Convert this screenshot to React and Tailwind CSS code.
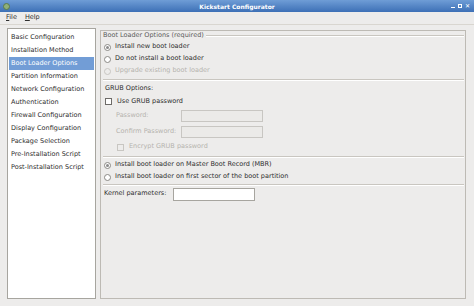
import React from "react";

const Radio = ({ checked, disabled }) => (
  <span
    className={`inline-flex items-center justify-center w-[7px] h-[7px] rounded-full border ${
      disabled ? "border-[#c8c6c2] bg-[#edeceb]" : "border-[#8a8884] bg-white"
    } mr-[4px] shrink-0`}
  >
    {checked && <span className="w-[3px] h-[3px] rounded-full bg-[#8a8a8a]" />}
  </span>
);

const Check = ({ disabled }) => (
  <span
    className={`inline-block w-[7px] h-[7px] border ${
      disabled ? "border-[#c8c6c2]" : "border-[#6d6b68] bg-white"
    } mr-[5px] shrink-0`}
  />
);

const Sep = ({ className = "" }) => (
  <div className={`h-[2px] border-t border-[#c9c6c0] border-b-white border-b ${className}`} />
);

export default function App() {
  const items = [
    "Basic Configuration",
    "Installation Method",
    "Boot Loader Options",
    "Partition Information",
    "Network Configuration",
    "Authentication",
    "Firewall Configuration",
    "Display Configuration",
    "Package Selection",
    "Pre-Installation Script",
    "Post-Installation Script",
  ];
  return (
    <div
      className="w-[474px] h-[306px] bg-[#edeceb] flex flex-col text-[6.5px] text-[#2e2e2e] overflow-hidden whitespace-nowrap"
      style={{ fontFamily: '"DejaVu Sans", sans-serif' }}
    >
      {/* title bar */}
      <div className="h-[12px] bg-gradient-to-b from-[#6f9dd6] to-[#3d70b6] flex items-center relative shrink-0">
        <span className="ml-[3px] w-[7px] h-[7px] rounded-full bg-[#8fb07a] border border-[#5b7a4a]" />
        <span className="absolute left-0 right-0 text-center text-white font-bold text-[6px]">
          Kickstart Configurator
        </span>
        <div className="ml-auto flex items-center gap-[3px] mr-[4px] text-white">
          <span className="w-[4px] h-[1px] bg-white mt-[3px]" />
          <span className="w-[4px] h-[4px] border border-white" />
          <span className="text-[6px] font-bold leading-none">✕</span>
        </div>
      </div>
      {/* menu */}
      <div className="h-[13px] flex items-center gap-[8px] pl-[6px] shrink-0 border-b border-[#d9d6d0] text-[6.5px]">
        <span><u>F</u>ile</span>
        <span><u>H</u>elp</span>
      </div>
      <div className="flex-1 flex pl-[7px] pr-[8px] pt-[3px] pb-[7px] gap-[4px]">
        {/* left list */}
        <div className="w-[89px] bg-white border border-[#a7a59f] flex flex-col pt-[2px] px-[1px]">
          {items.map((t) => (
            <div
              key={t}
              className={`h-[13px] flex items-center pl-[2px] ${
                t === "Boot Loader Options" ? "bg-[#729dd6] text-white" : ""
              }`}
            >
              {t}
            </div>
          ))}
        </div>
        {/* right panel */}
        <div className="flex-1 mt-[2px] border border-[#bdbab4] flex flex-col pl-[2px] pr-[1px]">
          <div className="flex items-center h-[10px]">
            <span className="text-[#5a5a5a]">Boot Loader Options (required)</span>
            <div className="flex-1 ml-[2px] h-[2px] border-t border-[#c9c6c0] border-b border-b-white" />
          </div>
          <div className="pl-[1px] flex flex-col">
            <div className="h-[12px] flex items-center"><Radio checked />Install new boot loader</div>
            <div className="h-[12px] flex items-center"><Radio />Do not install a boot loader</div>
            <div className="h-[12px] flex items-center text-[#b5b3ae]"><Radio disabled />Upgrade existing boot loader</div>
          </div>
          <Sep className="mt-[2px]" />
          <div className="pl-[2px] flex flex-col">
            <div className="h-[13px] flex items-center mt-[1px]">GRUB Options:</div>
            <div className="h-[13px] flex items-center"><Check />Use GRUB password</div>
            <div className="h-[16px] flex items-center text-[#b5b3ae]">
              <span className="w-[76px] pl-[11px]">Password:</span>
              <span className="w-[82px] h-[12px] border border-[#c8c6c2] bg-[#ebeae8]" />
            </div>
            <div className="h-[16px] flex items-center text-[#b5b3ae]">
              <span className="w-[76px] pl-[11px]">Confirm Password:</span>
              <span className="w-[82px] h-[12px] border border-[#c8c6c2] bg-[#ebeae8]" />
            </div>
            <div className="h-[14px] flex items-center text-[#b5b3ae] pl-[12px]"><Check disabled />Encrypt GRUB password</div>
          </div>
          <Sep className="mt-[2px]" />
          <div className="pl-[1px] flex flex-col mt-[1px]">
            <div className="h-[12px] flex items-center"><Radio checked />Install boot loader on Master Boot Record (MBR)</div>
            <div className="h-[12px] flex items-center"><Radio />Install boot loader on first sector of the boot partition</div>
          </div>
          <Sep className="mt-[1px]" />
          <div className="h-[16px] flex items-center pl-[1px]">
            <span className="w-[69px]">Kernel parameters:</span>
            <span className="w-[82px] h-[13px] border border-[#a7a59f] bg-white" />
          </div>
        </div>
      </div>
    </div>
  );
}
